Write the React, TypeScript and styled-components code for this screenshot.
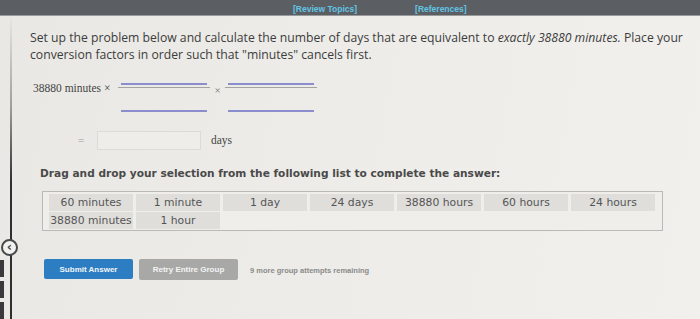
import styled, { createGlobalStyle } from "styled-components";

const GlobalStyle = createGlobalStyle`
  html, body {
    margin: 0;
    padding: 0;
    background: #ebeae6;
  }
  body {
    font-family: "DejaVu Sans", "Open Sans", sans-serif;
    color: #3f3f3f;
  }
`;

const tiles = [
  "60 minutes",
  "1 minute",
  "1 day",
  "24 days",
  "38880 hours",
  "60 hours",
  "24 hours",
  "38880 minutes",
  "1 hour",
];

const Fraction = () => (
  <FractionBox>
    <NumSlot />
    <FractionBar />
    <DenSlot />
  </FractionBox>
);

const App = () => {
  return (
    <>
      <GlobalStyle />
      <Page>
        <TopBar>
          <TopLink>[Review Topics]</TopLink>
          <TopLink>[References]</TopLink>
        </TopBar>
        <Body>
          <Rail>
            <RailBlocks>
              <RailBlock />
              <RailBlock />
              <RailBlock />
            </RailBlocks>
            <CollapseButton>&lsaquo;</CollapseButton>
          </Rail>
          <Content>
            <Instructions>
              <InstructionLine>
                Set up the problem below and calculate the number of days that are equivalent to{" "}
                <em>exactly 38880 minutes.</em> Place your
              </InstructionLine>
              <InstructionLine>conversion factors in order such that "minutes" cancels first.</InstructionLine>
            </Instructions>

            <EquationRow>
              <MathLabel>38880 minutes ×</MathLabel>
              <Fraction />
              <Times>×</Times>
              <Fraction />
            </EquationRow>

            <EqualsRow>
              <Equals>=</Equals>
              <AnswerInput />
              <MathUnit>days</MathUnit>
            </EqualsRow>

            <DragSection>
              <DragHeading>Drag and drop your selection from the following list to complete the answer:</DragHeading>
              <TileBox>
                {tiles.map((t) => (
                  <Tile key={t}>{t}</Tile>
                ))}
              </TileBox>

              <ButtonRow>
                <SubmitButton>Submit Answer</SubmitButton>
                <RetryButton>Retry Entire Group</RetryButton>
                <Attempts>9 more group attempts remaining</Attempts>
              </ButtonRow>
            </DragSection>
          </Content>
        </Body>
      </Page>
    </>
  );
};

export default App;

const Page = styled.div`
  width: 700px;
  height: 319px;
  overflow: hidden;
  display: flex;
  flex-direction: column;
  background: linear-gradient(100deg, #e9e8e4 0%, #eeede9 60%, #f1f0ed 100%);
`;

const TopBar = styled.div`
  height: 15px;
  background: #5b5e63;
  border-bottom: 1px solid #9a9b9c;
  display: flex;
  align-items: center;
  padding-left: 293px;
  gap: 58px;
`;

const TopLink = styled.span`
  font-family: "Liberation Sans", Arial, sans-serif;
  font-size: 8.5px;
  font-weight: 700;
  color: #62c4e4;
  padding-top: 3px;
`;

const Body = styled.div`
  flex: 1;
  display: flex;
`;

const Rail = styled.div`
  position: relative;
  width: 10px;
  flex-shrink: 0;
  border-right: 2px solid #2f2f2f;
  border-image: linear-gradient(to bottom, rgba(47, 47, 47, 0) 0%, rgba(47, 47, 47, 0.4) 30%, #2f2f2f 55%) 1;
`;

const RailBlocks = styled.div`
  position: absolute;
  left: 0;
  top: 244px;
  display: flex;
  flex-direction: column;
  gap: 4px;
`;

const RailBlock = styled.div`
  width: 4px;
  height: 17px;
  background: #3a3a3c;
`;

const CollapseButton = styled.div`
  position: absolute;
  left: 1px;
  top: 223px;
  width: 13px;
  height: 13px;
  border-radius: 50%;
  border: 2px solid #4a4a4a;
  background: #f2f2f0;
  color: #4a4a4a;
  font-family: "DejaVu Sans", sans-serif;
  font-weight: 700;
  font-size: 13px;
  line-height: 11px;
  text-align: center;
`;

const Content = styled.div`
  flex: 1;
  padding-left: 18px;
  display: flex;
  flex-direction: column;
`;

const Instructions = styled.div`
  margin-top: 14px;
  display: flex;
  flex-direction: column;
  font-family: "Open Sans", sans-serif;
  font-size: 12.2px;
  color: #3c3c3c;
`;

const InstructionLine = styled.div`
  line-height: 16.8px;
  white-space: nowrap;
`;

const EquationRow = styled.div`
  margin-top: 13px;
  margin-left: 3px;
  display: flex;
  align-items: flex-start;
`;

const MathLabel = styled.span`
  font-family: "Liberation Serif", serif;
  font-size: 11.5px;
  line-height: 14px;
  padding-top: 4px;
  color: #444;
  width: 85px;
`;

const Times = styled.span`
  font-family: "Liberation Serif", serif;
  font-size: 11px;
  line-height: 14px;
  padding-top: 6px;
  color: #777;
  width: 15px;
  text-align: center;
`;

const FractionBox = styled.div`
  width: 92px;
  display: flex;
  flex-direction: column;
  align-items: center;
`;

const NumSlot = styled.div`
  width: 86px;
  height: 6px;
  border-bottom: 2px solid #8a8ecc;
`;

const FractionBar = styled.div`
  width: 92px;
  height: 1px;
  margin-top: 2px;
  background: #a3a3a3;
`;

const DenSlot = styled.div`
  width: 86px;
  height: 22px;
  border-bottom: 2px solid #8a8ecc;
`;

const EqualsRow = styled.div`
  margin-top: 19px;
  display: flex;
  align-items: center;
  padding-left: 48px;
`;

const Equals = styled.span`
  font-family: "Liberation Serif", serif;
  font-size: 11px;
  color: #9a9a9a;
  width: 19px;
`;

const AnswerInput = styled.div`
  width: 102px;
  height: 17px;
  border: 1px solid #dcdbd8;
  background: #eeede9;
`;

const MathUnit = styled.span`
  margin-left: 10px;
  font-family: "Liberation Serif", serif;
  font-size: 11.5px;
  color: #444;
`;

const DragSection = styled.div`
  padding-left: 10px;
  display: flex;
  flex-direction: column;
`;

const DragHeading = styled.div`
  margin-top: 16px;
  font-family: "DejaVu Sans", sans-serif;
  font-weight: 700;
  font-size: 10.6px;
  line-height: 14px;
  color: #4a4a4a;
`;

const TileBox = styled.div`
  margin-top: 11px;
  margin-left: 2px;
  width: 607px;
  height: 34px;
  padding: 2px 6px;
  border: 1px solid #b9b9b7;
  background: #efeeeb;
  display: grid;
  grid-template-columns: repeat(7, 84px);
  grid-auto-rows: 17px;
  column-gap: 3px;
  row-gap: 1px;
`;

const Tile = styled.div`
  background: #dfdedb;
  font-family: "DejaVu Sans", sans-serif;
  font-size: 10.8px;
  line-height: 17px;
  color: #555;
  text-align: center;
  white-space: nowrap;
`;

const ButtonRow = styled.div`
  margin-top: 28px;
  margin-left: 4px;
  display: flex;
  align-items: center;
  gap: 6px;
`;

const BaseButton = styled.div`
  height: 20px;
  border-radius: 2px;
  font-family: "Liberation Sans", Arial, sans-serif;
  font-weight: 700;
  font-size: 8px;
  display: flex;
  align-items: center;
  justify-content: center;
`;

const SubmitButton = styled(BaseButton)`
  width: 89px;
  background: #2c7dc1;
  color: #f2f6fa;
`;

const RetryButton = styled(BaseButton)`
  width: 99px;
  height: 21px;
  background: #a8a8a7;
  color: #f4f4f4;
`;

const Attempts = styled.span`
  margin-left: 6px;
  font-family: "Liberation Sans", Arial, sans-serif;
  font-weight: 700;
  font-size: 7.5px;
  color: #8a8a8a;
  padding-top: 3px;
`;
